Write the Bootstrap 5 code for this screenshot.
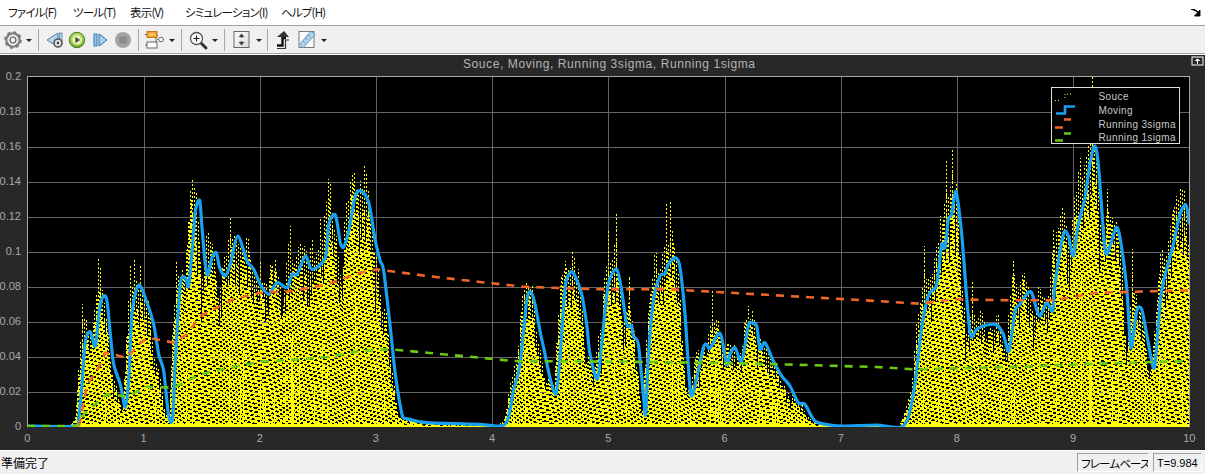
<!DOCTYPE html>
<html lang="ja">
<head>
<meta charset="utf-8">
<title>Scope</title>
<link href="https://cdn.jsdelivr.net/npm/bootstrap@5.3.0/dist/css/bootstrap.min.css" rel="stylesheet">
<style>
html,body{height:100%;overflow:hidden;background:#f0f0f0}
body{font-family:"Noto Sans CJK JP","Liberation Sans",sans-serif;font-size:12px;color:#000}
.scope-app{height:474px}
.menu-strip{height:26px;background:#fff;border-bottom:1px solid #a0a0a0;padding-left:8px;font-size:11.5px;letter-spacing:-.8px;font-feature-settings:"palt";line-height:25px;flex:none}
.menu-strip .menu-item{color:#111;text-decoration:none;white-space:nowrap}
.menu-w1{width:65px}.menu-w2{width:57px}.menu-w3{width:55px}.menu-w4{width:96px}
.menu-pin{margin-right:4px}
.tool-strip{height:28px;background:#f0f0f0;border-bottom:1px solid #a0a0a0;box-shadow:0 1px 0 #fff;padding-left:1px;flex:none}
.tool-icon{width:23px;height:24px;flex:none}
.tool-wide{width:24px}
.tool-narrow{width:22px}
.tool-caret{width:8px;height:24px;flex:none}
.tool-sep{width:1px;height:22px;background:#a8a8a8;flex:none}
.lead-1{margin-left:1px}.lead-3{margin-left:3px}.lead-4{margin-left:4px}.lead-45{margin-left:4.5px}.lead-5{margin-left:5px}.lead-55{margin-left:5.5px}
.plot-panel{height:395px;background:#282828;margin-top:1px;flex:none}
.plot-panel svg{display:block}
.status-strip{flex:1;background:#f0f0f0;border-top:1px solid #fff;font-size:12px;padding:0 3px 2px 1px;line-height:18px}
.status-cell{height:19px;flex:none;border:1px solid;border-color:#a0a0a0 #fff #fff #a0a0a0;white-space:nowrap;padding-left:3px;line-height:18px;overflow:hidden}
.cell-mode{width:72px;margin-right:4px;font-size:11.5px;letter-spacing:-.8px;font-feature-settings:"palt"}
.cell-time{width:49px;font-family:"Liberation Sans",sans-serif;font-size:11px}
.tick-text{font-family:"Liberation Sans",sans-serif;font-size:11px;fill:#a8a8a8}
.plot-title{font-family:"Liberation Sans",sans-serif;font-size:12px;fill:#b4b4b4}
.legend-text{font-family:"Liberation Sans",sans-serif;font-size:10px;fill:#c8c8c8}
</style>
</head>
<body>
<div class="scope-app d-flex flex-column">
  <nav class="menu-strip d-flex align-items-center">
    <a class="menu-item menu-w1" href="#">ファイル(F)</a>
    <a class="menu-item menu-w2" href="#">ツール(T)</a>
    <a class="menu-item menu-w3" href="#">表示(V)</a>
    <a class="menu-item menu-w4" href="#">シミュレーション(I)</a>
    <a class="menu-item" href="#">ヘルプ(H)</a>
    <svg class="ms-auto menu-pin" width="10" height="8" viewBox="0 0 10 8"><path d="M0 0.5H4L7 3.5M4 1.5H5.5L8 4M9 1V7H3.5Z" fill="#000" stroke="#000" stroke-width=".9"/></svg>
  </nav>
  <div class="tool-strip d-flex align-items-center">
    <svg class="tool-icon tool-wide" viewBox="0 0 24 24"><g transform="translate(12 12)" fill="none"><circle r="6.6" stroke="#7a7a7a" stroke-width="2.4"/><circle r="8" stroke="#7a7a7a" stroke-width="1.6" stroke-dasharray="3 3.28"/><circle r="5.3" stroke="#ddd" stroke-width=".8"/><circle r="3" stroke="#555" stroke-width="1.2" fill="#eee"/></g></svg>
    <svg class="tool-caret" viewBox="0 0 8 24"><path d="M1 11H7L4 14Z" fill="#222"/></svg>
    <span class="tool-sep lead-5"></span>
    <svg class="tool-icon tool-narrow lead-5" viewBox="0 0 22 24"><path d="M14 5V19L3 12Z" fill="#b9d8ee" stroke="#4b7fa8"/><rect x="15.5" y="5" width="2.5" height="9" fill="#b9d8ee" stroke="#4b7fa8" stroke-width=".8"/><circle cx="14" cy="15" r="4" fill="#ddd" stroke="#555" stroke-width="1.6"/><circle cx="14" cy="15" r="1.2" fill="#333"/></svg>
    <svg class="tool-icon" viewBox="0 0 23 24"><defs><radialGradient id="playGlow" cx=".5" cy=".4" r=".6"><stop offset="0" stop-color="#e8f6b0"/><stop offset=".7" stop-color="#9ccc3c"/><stop offset="1" stop-color="#5c9a20"/></radialGradient></defs><circle cx="11" cy="12" r="7.7" fill="url(#playGlow)" stroke="#4a7f22" stroke-width="1"/><circle cx="11" cy="12" r="4.6" fill="#eef4c8"/><path d="M9.3 8.8V15.2L14.3 12Z" fill="#4c5a3a"/></svg>
    <svg class="tool-icon" viewBox="0 0 23 24"><rect x="5" y="6" width="3" height="12" fill="#8fc8ee" stroke="#2f6ea8" stroke-width=".9"/><path d="M10 6V18L18 12Z" fill="#a8d4f2" stroke="#2f6ea8"/></svg>
    <svg class="tool-icon" viewBox="0 0 23 24"><circle cx="11" cy="12" r="8" fill="#a3a3a3"/><rect x="7.5" y="8.5" width="7" height="7" fill="#8a8a8a"/></svg>
    <span class="tool-sep lead-3"></span>
    <svg class="tool-icon tool-wide lead-5" viewBox="0 0 24 24"><path d="M12 11.5V7H14M12 11.5V16M13 11.5H16" fill="none" stroke="#666" stroke-width="1"/><rect x="3" y="3.5" width="10" height="6" fill="#f0a030" stroke="#c87810"/><rect x="5" y="5" width="6" height="3" fill="#f8c060"/><rect x="3" y="14" width="10" height="6" fill="#fff" stroke="#666"/><circle cx="17" cy="11.5" r="2.3" fill="#fff" stroke="#666"/><path d="M19 11.5H20M1 6.5H3M1 17H3" stroke="#666"/></svg>
    <svg class="tool-caret" viewBox="0 0 8 24"><path d="M1 11H7L4 14Z" fill="#222"/></svg>
    <span class="tool-sep lead-5"></span>
    <svg class="tool-icon tool-wide lead-4" viewBox="0 0 24 24"><line x1="15.5" y1="15.5" x2="20" y2="20" stroke="#333" stroke-width="3" stroke-linecap="round"/><circle cx="10.5" cy="10.5" r="6" fill="#fbfbfb" stroke="#555" stroke-width="1.3"/><path d="M7.5 10.5H13.5M10.5 7.5V13.5" stroke="#222" stroke-width="1.2"/></svg>
    <svg class="tool-caret lead-1" viewBox="0 0 8 24"><path d="M1 11H7L4 14Z" fill="#222"/></svg>
    <span class="tool-sep lead-5"></span>
    <svg class="tool-icon tool-wide lead-55" viewBox="0 0 24 24"><defs><linearGradient id="fitFill" x1="0" y1="0" x2="1" y2="1"><stop offset="0" stop-color="#fff"/><stop offset="1" stop-color="#d8d8d8"/></linearGradient></defs><rect x="3" y="3.5" width="15" height="16" fill="url(#fitFill)" stroke="#666"/><path d="M10.5 5.5L13.5 9H7.5ZM10.5 17.5L13.5 14H7.5Z" fill="#444"/><rect x="9.5" y="9" width="2" height="1" fill="#777"/><rect x="9.5" y="13" width="2" height="1" fill="#777"/></svg>
    <svg class="tool-caret" viewBox="0 0 8 24"><path d="M1 11H7L4 14Z" fill="#222"/></svg>
    <span class="tool-sep lead-45"></span>
    <svg class="tool-icon tool-wide lead-3" viewBox="0 0 24 24"><path d="M6 17.5H11.5V10H15" fill="none" stroke="#111" stroke-width="2.4"/><path d="M6 20.5H14.5V12H18" fill="none" stroke="#333" stroke-width="1.2"/><path d="M13 3L18 9H6Z" fill="#333"/></svg>
    <svg class="tool-icon tool-wide lead-1" viewBox="0 0 24 24"><rect x="3" y="3.5" width="15" height="16" fill="#fbfbfb" stroke="#777"/><path d="M3.5 16.5L15 3L19 6.5L7 20Z" fill="#a9d4ee" stroke="#5f90b4" stroke-width=".9"/><path d="M7 13L9 15M9.5 10L11.5 12M12 7L14 9" stroke="#5f90b4" stroke-width=".8"/></svg>
    <svg class="tool-caret" viewBox="0 0 8 24"><path d="M1 11H7L4 14Z" fill="#222"/></svg>
  </div>
  <main class="plot-panel">
    <svg id="plotArea" width="1205" height="395" viewBox="0 54 1205 395" xmlns="http://www.w3.org/2000/svg">
      <defs><clipPath id="axesClip"><rect x="27" y="75" width="1163" height="351"/></clipPath></defs>
      <text class="plot-title" x="463" y="67" textLength="292">Souce, Moving, Running 3sigma, Running 1sigma</text>
      <g fill="none" stroke="#fff" stroke-width="1"><rect x="1192" y="56" width="11" height="8"/><path d="M1197.5 63V59"/></g>
      <path d="M1194.5 60H1200.5L1197.5 57.5Z" fill="#fff"/>
      <rect x="27" y="75" width="1163" height="351" fill="#000"/>
      <g id="gridLayer" stroke="#646464" stroke-width="1" shape-rendering="crispEdges"></g>
      <g id="tickLayer"></g>
      <g clip-path="url(#axesClip)">
        <path id="sourceFill" fill="none" stroke="#ffff00" stroke-width="1" shape-rendering="crispEdges"/>
        <path id="movingLine" fill="none" stroke="#18a0f4" stroke-width="3.2" stroke-linejoin="round"/>
        <path id="sigma3Line" fill="none" stroke="#f0662a" stroke-width="2.6" stroke-dasharray="8 7"/>
        <path id="sigma1Line" fill="none" stroke="#68c814" stroke-width="2.6" stroke-dasharray="8 7"/>
      </g>
      <path d="M27.5 426V75.5H1189.5V426" fill="none" stroke="#a8a8a8" shape-rendering="crispEdges"/>
      <g>
        <rect x="1051.5" y="86.5" width="128" height="56" fill="#000" stroke="#e0e0e0" shape-rendering="crispEdges"/>
        <path d="M1055 99.5H1061M1065 97V93H1072" fill="none" stroke="#ffff00" stroke-dasharray="1 2"/>
        <path d="M1056 112.5H1065V105.5H1075" fill="none" stroke="#18a0f4" stroke-width="2.6"/>
        <path d="M1055 126.5H1063M1064 118.5H1071" fill="none" stroke="#f0662a" stroke-width="2.6"/>
        <path d="M1055 139.5H1063M1064 132.5H1071" fill="none" stroke="#68c814" stroke-width="2.6"/>
        <text class="legend-text" x="1098.5" y="99" textLength="30">Souce</text>
        <text class="legend-text" x="1098.5" y="113" textLength="34">Moving</text>
        <text class="legend-text" x="1098.5" y="126.5" textLength="77">Running 3sigma</text>
        <text class="legend-text" x="1098.5" y="140" textLength="77">Running 1sigma</text>
      </g>
    </svg>
  </main>
  <footer class="status-strip d-flex align-items-end">
    <span class="me-auto">準備完了</span>
    <span class="status-cell cell-mode">フレームベース</span>
    <span class="status-cell cell-time">T=9.984</span>
  </footer>
</div>
<script>
(function(){
  var x0=27.3,xs=116.2,y0=425.7,ys=1750.9;
  var grid='',ticks='';
  for(var i=0;i<=10;i++){var gx=Math.round(x0+i*xs)+.5;
    if(i>0&&i<10)grid+='<line x1="'+gx+'" x2="'+gx+'" y1="75" y2="426"/>';
    ticks+='<text class="tick-text" text-anchor="middle" x="'+(x0+i*xs)+'" y="441">'+i+'</text>';}
  for(var j=1;j<10;j++){var gy=Math.round(y0-j*0.02*ys)+.5;
    grid+='<line x1="27" x2="1190" y1="'+gy+'" y2="'+gy+'"/>';
  }
  for(var k=0;k<=10;k++){var val=k*0.02,ly=y0-val*ys+3.5;
    ticks+='<text class="tick-text" text-anchor="end" x="21" y="'+ly+'">'+(k==0?'0':String(+val.toFixed(2)))+'</text>';}
  document.getElementById('gridLayer').innerHTML=grid;
  document.getElementById('tickLayer').innerHTML=ticks;

  function z(list,ox,oy){var o=[];for(var i=0;i<list.length;i+=2)o.push([ox+list[i]/3,oy+list[i+1]/3]);return o;}
  var blue=[].concat(
   z([0,915,140,915,155,890,165,790,175,660,190,632,205,675,218,560,230,525,240,540,250,640,260,730,280,790,295,858,305,780,315,575,335,492,360,545,380,610,395,700,410,750,425,885,437,890,445,720,460,490,475,470,485,495,497,370,505,270,518,238,525,320,535,430,543,462,555,410,568,395,578,440,595,465,610,430,632,345,660,420,680,445,700,490,725,520,750,485,780,500,795,460,810,460,835,405,855,445,895,410,905,310,925,282,940,365,950,378,965,330,985,225,1002,210,1025,245,1045,360,1060,420,1070,450,1090,620,1105,760,1125,880,1140,893,1200,905],27,120),
   z([0,670,65,675,85,650,100,570,120,490,140,300,152,272,165,310,180,390,195,460,210,530,228,578,240,470,255,260,272,213,285,225,305,280,320,370,330,460,352,535,365,430,385,250,410,205,425,270,440,370,455,375,460,405,475,430,490,580,497,640,505,470,520,300,540,225,555,218,565,190,587,170,600,200,615,340,632,578,650,530,670,440,680,430,690,442,715,398,725,410,740,490,750,460,765,440,785,480,805,375,815,365,830,375,840,445,855,425,880,480,905,525,930,555,955,605,975,610,1005,660,1050,672,1090,675,1190,672],480,200),
   z([70,915,100,820,125,620,140,540,150,515,170,490,185,370,195,380,205,295,215,280,228,212,245,340,260,530,272,645,290,625,320,612,350,612,370,640,387,690,405,570,420,550,440,520,455,515,478,585,500,545,518,570,525,490,550,340,565,345,580,405,595,310,615,230,628,140,643,75,655,130,675,385,690,375,708,320,720,350,740,500,753,680,770,570,785,565,800,640,820,740,828,700,845,510,880,370,900,280,918,252,928,310],880,120));
  var orange=[].concat(
   z([155,915,160,900,180,790,210,750,235,695,300,710,340,665,365,650,440,665,480,640,520,585,620,535,700,515,800,510,900,490,1000,455,1050,445,1200,465],27,120),
   z([0,243,130,257,350,265,570,265,800,278,1190,300],480,200),
   z([120,548,220,535,400,538,520,538,650,515,928,508],880,120));
  var green=[].concat(
   z([0,915,150,915,170,880,210,845,240,820,300,826,360,797,440,800,520,760,600,742,700,722,800,716,900,708,1000,690,1090,685,1200,695],27,120),
   z([0,470,100,480,400,482,700,485,900,490,1190,498],480,200),
   z([100,745,400,738,650,728,928,720],880,120));
  function smooth(p){
    var d='M'+p[0][0].toFixed(1)+' '+p[0][1].toFixed(1);
    for(var i=0;i<p.length-1;i++){
      var a=p[Math.max(i-1,0)],b=p[i],c=p[i+1],e=p[Math.min(i+2,p.length-1)],t=.14;
      d+='C'+(b[0]+(c[0]-a[0])*t).toFixed(1)+' '+(b[1]+(c[1]-a[1])*t).toFixed(1)+' '+(c[0]-(e[0]-b[0])*t).toFixed(1)+' '+(c[1]-(e[1]-b[1])*t).toFixed(1)+' '+c[0].toFixed(1)+' '+c[1].toFixed(1);
    }
    return d;
  }
  function poly(p){return 'M'+p.map(function(q){return q[0].toFixed(1)+' '+q[1].toFixed(1)}).join('L');}
  document.getElementById('movingLine').setAttribute('d',smooth(blue));
  document.getElementById('sigma3Line').setAttribute('d',poly(orange));
  document.getElementById('sigma1Line').setAttribute('d',poly(green));

  function blueY(x){
    if(x<=blue[0][0])return y0;
    for(var i=0;i<blue.length-1;i++){if(x>=blue[i][0]&&x<=blue[i+1][0]){var f=(x-blue[i][0])/(blue[i+1][0]-blue[i][0]);return blue[i][1]+f*(blue[i+1][1]-blue[i][1]);}}
    return blue[blue.length-1][1];
  }
  var spikes=[[82,303],[84,317],[98,258],[100,267],[130,265],[134,259],[140,265],[176,261],[191,123],[194,197],[209,213],[229,227],[241,233],[253,250],[260,260],[275,250],[290,225],[299,218],[312,243],[320,217],[327,165],[352,172],[360,180],[364,165],[366,172],
   [525,260],[529,278],[561,257],[565,254],[575,268],[578,268],[608,230],[616,212],[629,258],[654,265],[662,253],[666,202],[670,200],[712,288],[717,286],[727,330],[748,305],[765,340],
   [924,245],[929,258],[935,257],[941,228],[946,160],[952,149],[972,279],[979,307],[1013,218],[1023,235],[1043,282],[1053,208],[1063,168],[1075,147],[1085,143],[1092,76],[1107,162],[1117,189],[1132,248],[1163,248],[1173,177],[1177,175]];
  var seed=12345;function rnd(){seed=(seed*1664525+1013904223)%4294967296;return seed/4294967296;}
  var runs=[];
  for(var px=28;px<1190;px++){
    var h=(y0-blueY(px+4));
    var env=h*(1.02+.12*Math.sin(px*.31)+.07*Math.sin(px*.77));
    var c=rnd();
    if(c<.1)env*=.62+.25*rnd();
    for(var s=0;s<spikes.length;s++){
      var dx=Math.abs(px-spikes[s][0]);
      if(dx<6&&(dx==0||h>6)){
        var sh=(y0-spikes[s][1]);
        if(dx>0)sh=h+(sh-h)*.45*Math.exp(-dx*.22);
        if(sh>env)env=sh;
      }
    }
    if(env<.6)continue;
    var ha=env*(px%2==0?1:.7+.28*rnd());
    var hb=env*(.7+.25*rnd());
    var hs=Math.min(3,env*.2);
    if(rnd()<.07)hs=env*(.2+.4*rnd());
    var pa=Math.round(px*.5+2*Math.sin(px*.11)+1.5*Math.sin(px*.037));
    var pb=Math.round(-px*.7+2.5*Math.sin(px*.09+1));
    var start=-1;
    for(var y=0;y<=ha+1;y++){
      var on=y<ha&&(y<hs||((y+pa)%4+4)%4<2||(y<hb&&((y+pb)%5+5)%5<2));
      if(on&&start<0)start=y;
      if(!on&&start>=0){runs.push('M'+(px+.5)+' '+(426-start)+'V'+(426-y));start=-1;}
    }
  }
  document.getElementById('sourceFill').setAttribute('d',runs.join(''));
})();
</script>
<script src="https://cdn.jsdelivr.net/npm/bootstrap@5.3.0/dist/js/bootstrap.bundle.min.js"></script>
</body>
</html>
